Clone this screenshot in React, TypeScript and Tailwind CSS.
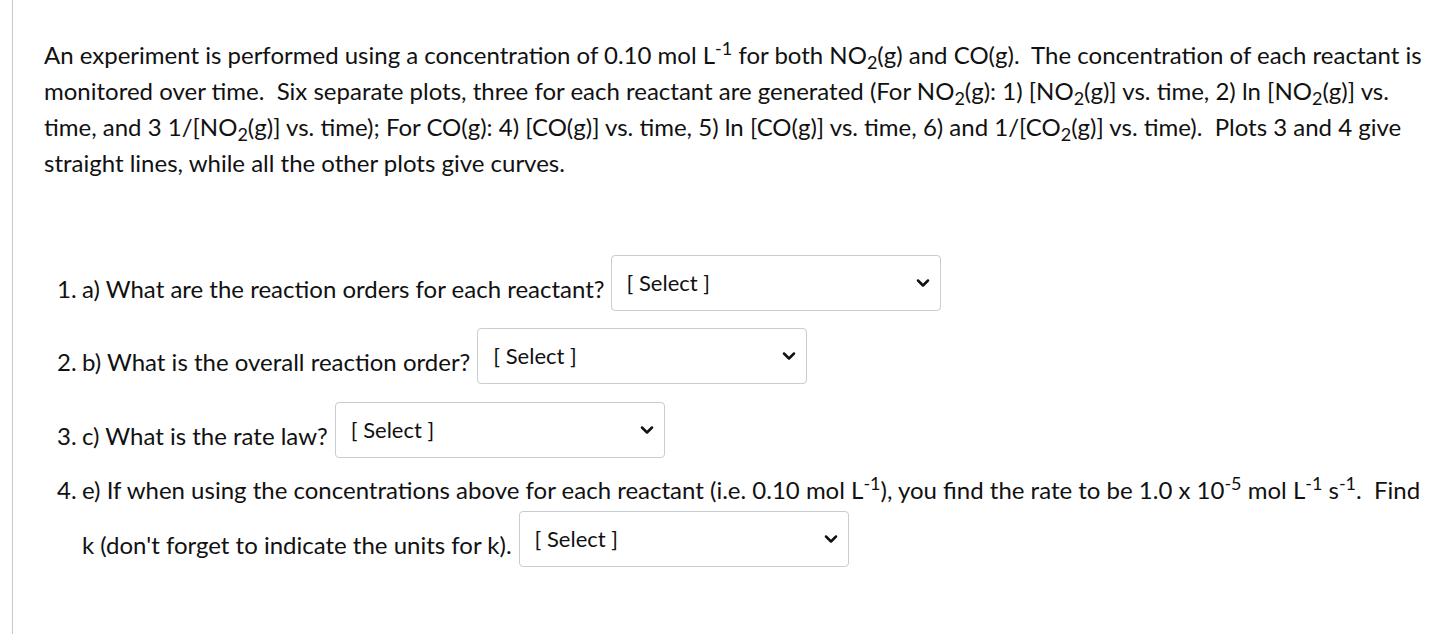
import { ChevronDown } from "lucide-react";

function SelectBox() {
  return (
    <div className="w-[330px] h-[56px] shrink-0 border border-[#c7cdd1] rounded-[4px] bg-white flex items-center justify-between pl-[15px] pr-[7px]">
      <span className="text-[22px] text-[#111]">[ Select ]</span>
      <ChevronDown size={20} strokeWidth={3} className="text-[#111]" />
    </div>
  );
}

export default function App() {
  return (
    <div
      className="min-h-[634px] bg-white text-[24px] leading-[36px] text-[#111]"
      style={{ fontFamily: "Lato, 'Noto Sans', sans-serif" }}
    >
      <div className="ml-[12px] min-h-[634px] border-l border-[#c8c8c8] pl-[31px] pr-[20px] pt-[37px]">
        {/* intro paragraph */}
        <p className="max-w-[1386px]">
          An experiment is performed using a concentration of 0.10 mol L<sup>-1</sup> for both NO<sub>2</sub>(g) and
          CO(g).&nbsp; The concentration of each reactant is monitored over time.&nbsp; Six separate plots, three for
          each reactant are generated (For NO<sub>2</sub>(g): 1) [NO<sub>2</sub>(g)] vs. time, 2) ln [NO<sub>2</sub>(g)]
          vs. time, and 3 1/[NO<sub>2</sub>(g)] vs. time); For CO(g): 4) [CO(g)] vs. time, 5) ln [CO(g)] vs. time, 6)
          and 1/[CO<sub>2</sub>(g)] vs. time).&nbsp; Plots 3 and 4 give straight lines, while all the other plots give
          curves.
        </p>

        {/* questions */}
        <div className="mt-[74px] pl-[13px]">
          <div className="flex">
            <span className="w-[25px] shrink-0 mt-[16px]">1.</span>
            <div className="flex items-start gap-[6px]">
              <span className="mt-[16px]">a) What are the reaction orders for each reactant?</span>
              <SelectBox />
            </div>
          </div>

          <div className="flex mt-[17px]">
            <span className="w-[25px] shrink-0 mt-[16px]">2.</span>
            <div className="flex items-start gap-[7px]">
              <span className="mt-[16px]">b) What is the overall reaction order?</span>
              <SelectBox />
            </div>
          </div>

          <div className="flex mt-[18px]">
            <span className="w-[25px] shrink-0 mt-[16px]">3.</span>
            <div className="flex items-start gap-[7px]">
              <span className="mt-[16px]">c) What is the rate law?</span>
              <SelectBox />
            </div>
          </div>

          <div className="flex mt-[14px]">
            <span className="w-[25px] shrink-0">4.</span>
            <div>
              <div className="whitespace-nowrap">
                e) If when using the concentrations above for each reactant (i.e. 0.10 mol L<sup>-1</sup>), you find
                the rate to be 1.0 x 10<sup>-5</sup> mol L<sup>-1</sup> s<sup>-1</sup>.&nbsp; Find
              </div>
              <div className="flex items-start gap-[7px] mt-[3px]">
                <span className="mt-[16px]">k (don't forget to indicate the units for k).</span>
                <SelectBox />
              </div>
            </div>
          </div>
        </div>
      </div>
    </div>
  );
}
